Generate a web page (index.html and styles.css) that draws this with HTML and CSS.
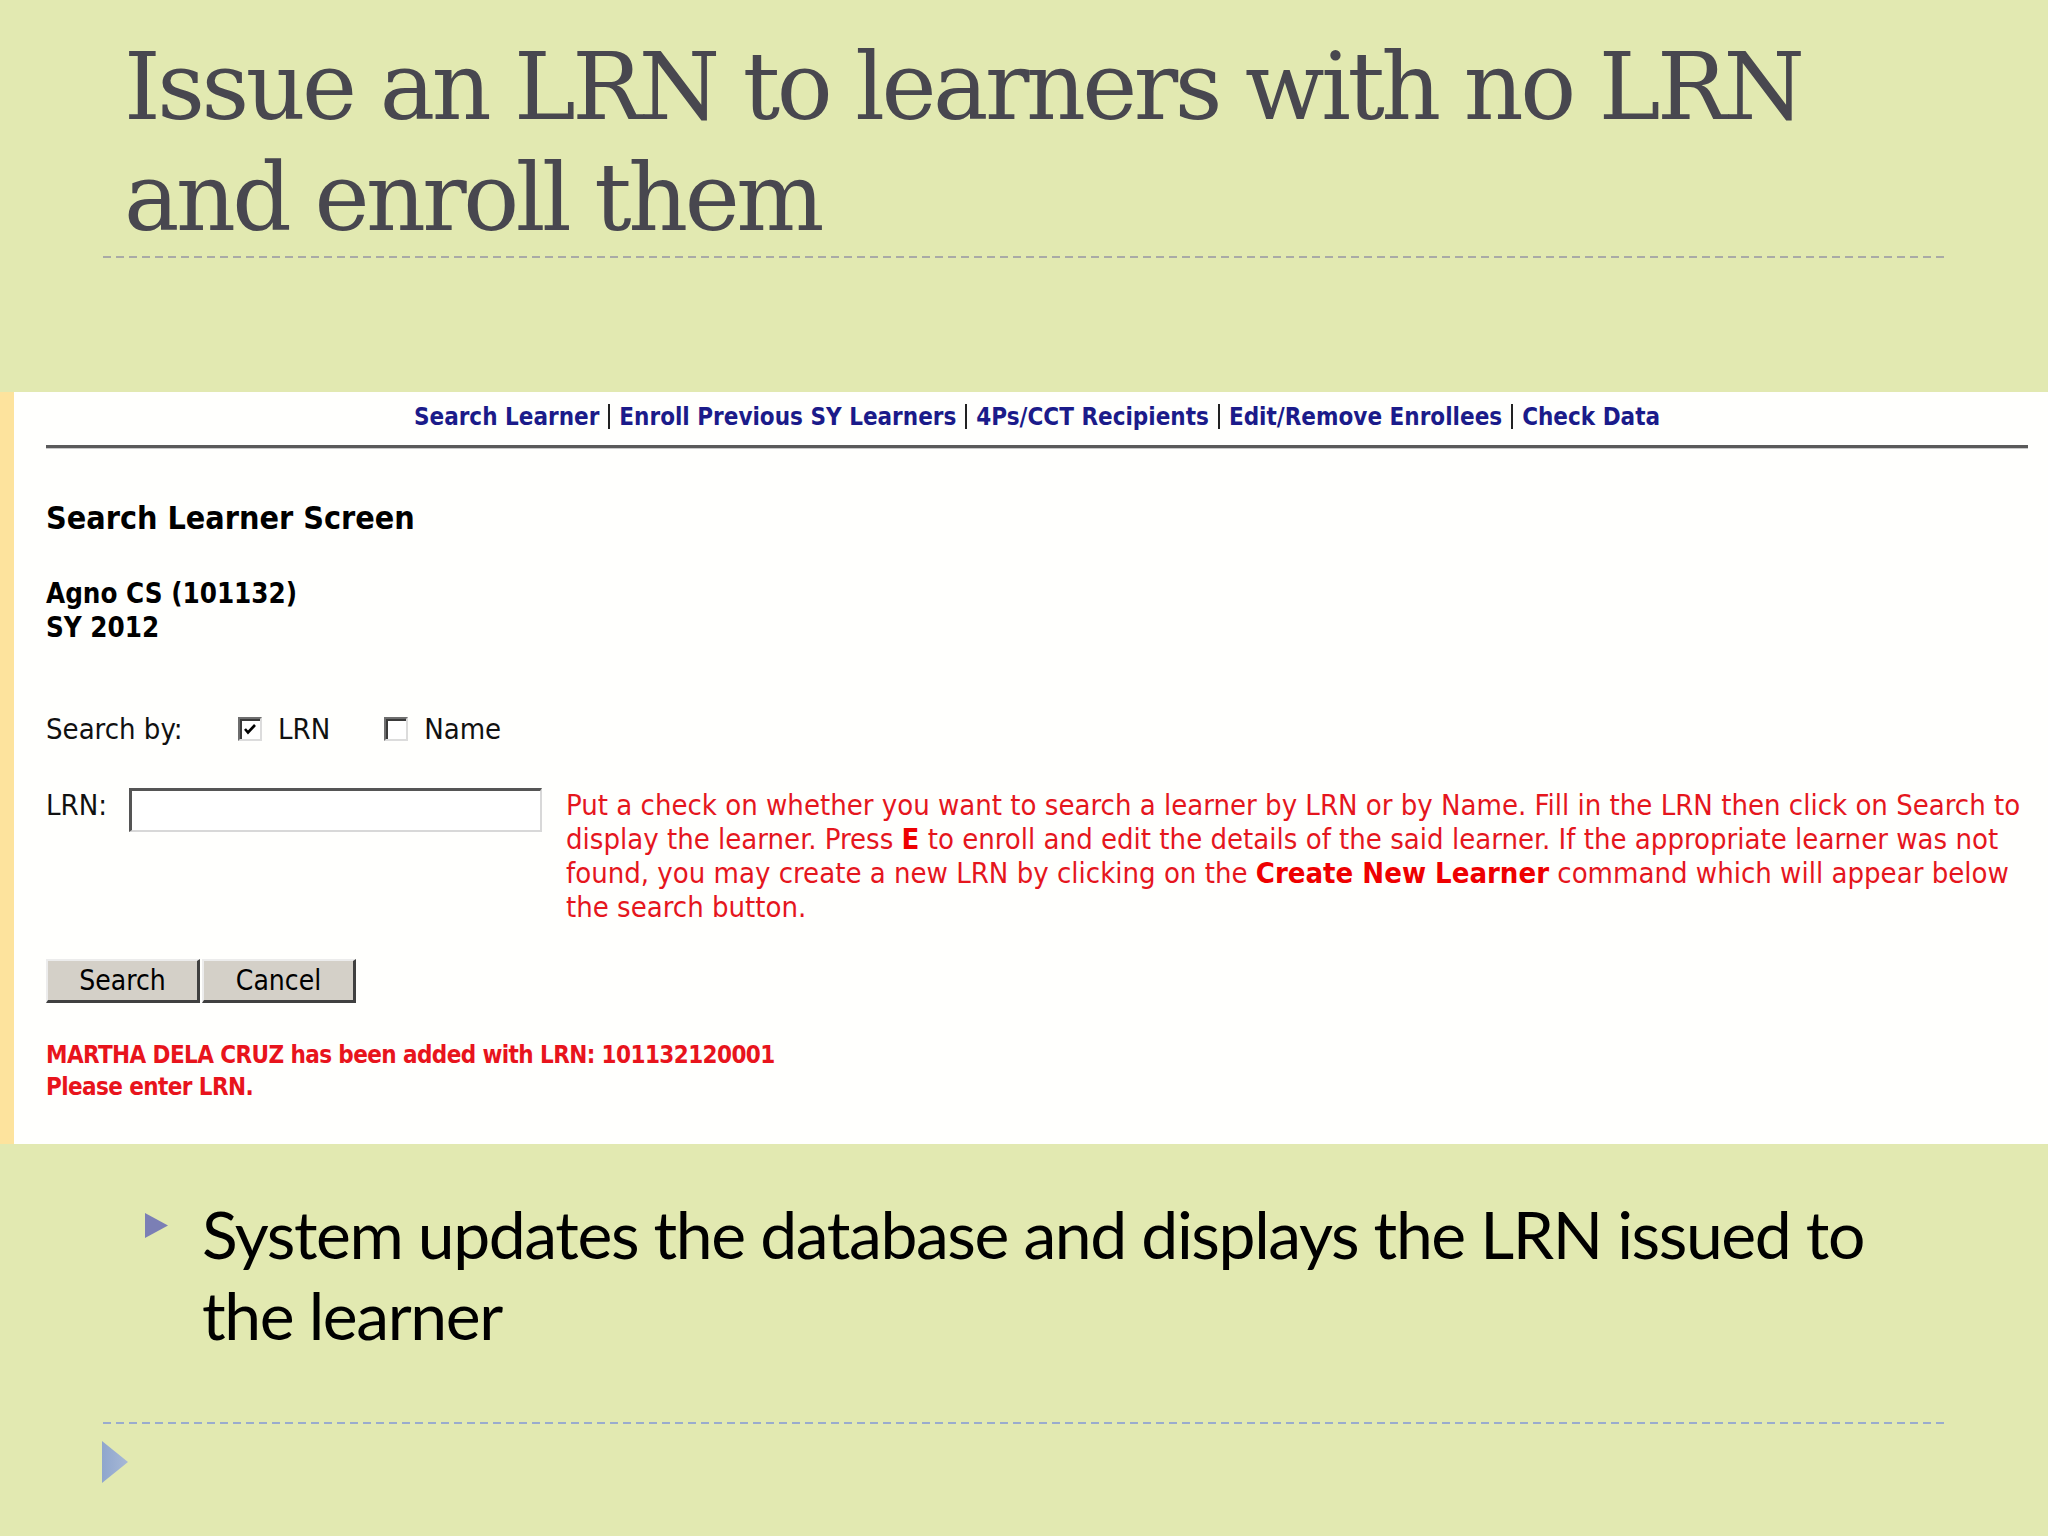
FILE: index.html
```html
<!DOCTYPE html>
<html lang="en">
<head>
  <meta charset="UTF-8" />
  <title>Issue an LRN to learners with no LRN</title>
  <link rel="stylesheet" href="styles.css">
</head>
<body>
  <div class="slide">
    <h1 class="slide-title">Issue an LRN to learners with no LRN<br>and enroll them</h1>
    <div class="dash-rule"></div>

    <div class="screen">
      <div class="top-nav">
        <a href="#">Search Learner</a><span class="sep"></span><a href="#">Enroll Previous SY Learners</a><span class="sep"></span><a href="#">4Ps/CCT Recipients</a><span class="sep"></span><a href="#">Edit/Remove Enrollees</a><span class="sep"></span><a href="#">Check Data</a>
      </div>
      <div class="nav-rule"></div>

      <div class="screen-title">Search Learner Screen</div>
      <div class="school">Agno CS (101132)<br>SY 2012</div>

      <div class="search-by">
        <span class="search-label">Search by:</span>
        <span class="check">
          <span class="box">
            <svg viewBox="0 0 14 14" width="14" height="14"><path d="M2 7 L5 10.5 L12 3" fill="none" stroke="#000" stroke-width="2.6"/></svg>
          </span>
          LRN
        </span>
        <span class="check">
          <span class="box"></span>
          Name
        </span>
      </div>

      <div class="lrn-row">
        <span class="lrn-label">LRN:</span>
        <input class="lrn-input" type="text">
        <p class="help">Put a check on whether you want to search a learner by LRN or by Name. Fill in the LRN then click on Search to<br>
          display the learner. Press <b>E</b> to enroll and edit the details of the said learner. If the appropriate learner was not<br>
          found, you may create a new LRN by clicking on the <b>Create New Learner</b> command which will appear below<br>
          the search button.</p>
      </div>

      <div class="buttons">
        <button class="win-btn">Search</button><button class="win-btn">Cancel</button>
      </div>

      <div class="messages">
        MARTHA DELA CRUZ has been added with LRN: 101132120001<br>
        Please enter LRN.
      </div>
    </div>

    <ul class="points">
      <li>System updates the database and displays the LRN issued to the learner</li>
    </ul>
    <div class="dash-rule bottom"></div>
    <div class="corner-arrow"></div>
  </div>
</body>
</html>
```

FILE: styles.css
```css
body {
  margin: 0;
  background-color: #e2e9b1;
}
.slide {
  width: 2048px;
  height: 1536px;
  overflow: hidden;
}
.slide-title {
  margin: 0;
  padding: 32px 0 0 124px;
  font-family: "DejaVu Serif", "Liberation Serif", serif;
  font-weight: normal;
  font-size: 93px;
  line-height: 111px;
  letter-spacing: -3.5px;
  color: #48474f;
}
.dash-rule {
  margin: 2px 0 0 103px;
  width: 1843px;
  height: 2px;
  background: linear-gradient(to right, #a9aaa6 0 8px, transparent 8px 13px);
  background-size: 13px 2px;
}

/* embedded screenshot */
.screen {
  box-sizing: border-box;
  margin-top: 134px;
  height: 752px;
  background: #fffffd;
  border-left: 14px solid #fde39d;
  padding: 10px 20px 0 32px;
  font-family: "DejaVu Sans Condensed", "DejaVu Sans", sans-serif;
  color: #111;
}
.top-nav {
  text-align: center;
  font-weight: bold;
  font-size: 24px;
  line-height: 30px;
}
.top-nav a {
  color: #1b1b8a;
  text-decoration: none;
}
.top-nav .sep {
  display: inline-block;
  width: 2px;
  height: 25px;
  background: #222;
  margin: 0 9px;
  vertical-align: -4px;
}
.nav-rule {
  margin-top: 13px;
  border-top: 3px solid #5a5a5a;
  border-bottom: 1px solid #c9c9c9;
}
.screen-title {
  margin-top: 51px;
  font-size: 32px;
  line-height: 36px;
  font-weight: bold;
  color: #000;
}
.school {
  margin-top: 40px;
  font-size: 27.5px;
  line-height: 34px;
  font-weight: bold;
  color: #000;
}
.search-by {
  margin-top: 68px;
  display: flex;
  align-items: center;
  height: 34px;
  font-size: 29px;
}
.search-label {
  width: 192px;
}
.check {
  display: flex;
  align-items: center;
  gap: 16px;
  margin-right: 54px;
}
.box {
  box-sizing: border-box;
  width: 24px;
  height: 24px;
  border-top: 2px solid #6e6e6e;
  border-left: 2px solid #6e6e6e;
  border-right: 2px solid #dcdcdc;
  border-bottom: 2px solid #dcdcdc;
  box-shadow: inset 2px 2px 0 #3a3a3a;
  background: #fff;
  display: flex;
  align-items: center;
  justify-content: center;
}
.lrn-row {
  margin-top: 42px;
  display: flex;
  align-items: flex-start;
  font-size: 29px;
  line-height: 34px;
}
.lrn-label {
  width: 83px;
}
.lrn-input {
  box-sizing: border-box;
  width: 413px;
  height: 44px;
  margin: 0;
  border-top: 3px solid #555;
  border-left: 3px solid #555;
  border-right: 2px solid #d8d8d8;
  border-bottom: 2px solid #d8d8d8;
  background: #fff;
}
.help {
  margin: 0 0 0 24px;
  width: 1462px;
  white-space: nowrap;
  color: #e5161d;
  font-size: 29px;
  line-height: 34px;
}
.help b {
  color: #e00;
}
.buttons {
  margin-top: 35px;
  display: flex;
  gap: 2px;
}
.win-btn {
  box-sizing: border-box;
  width: 154px;
  height: 44px;
  background: #d4d0c8;
  border: none;
  border-top: 2px solid #ececec;
  border-left: 2px solid #ececec;
  border-right: 3px solid #404040;
  border-bottom: 3px solid #404040;
  font-family: inherit;
  font-size: 28px;
  color: #000;
  padding: 0;
}
.messages {
  margin-top: 36px;
  color: #e8141c;
  font-weight: bold;
  font-size: 24px;
  letter-spacing: -0.6px;
  line-height: 32px;
}

/* slide bullets */
.points {
  list-style: none;
  margin: 0;
  padding: 49px 0 0 202px;
  width: 1700px;
  font-family: Lato, "Open Sans", sans-serif;
  font-size: 66px;
  letter-spacing: -1.4px;
  line-height: 81px;
  color: #000;
}
.points li {
  position: relative;
}
.points li::before {
  content: "";
  position: absolute;
  left: -57px;
  top: 20px;
  width: 23px;
  height: 25px;
  background: #7b7fb5;
  clip-path: polygon(0 0, 100% 50%, 0 100%);
}
.dash-rule.bottom {
  margin-top: 67px;
  background: linear-gradient(to right, #9aaccd 0 8px, transparent 8px 13px);
  background-size: 13px 2px;
}
.corner-arrow {
  margin: 17px 0 0 102px;
  width: 26px;
  height: 42px;
  background: linear-gradient(to right, #8fa6cd, #a7b8d6);
  clip-path: polygon(0 0, 100% 50%, 0 100%);
}
```
